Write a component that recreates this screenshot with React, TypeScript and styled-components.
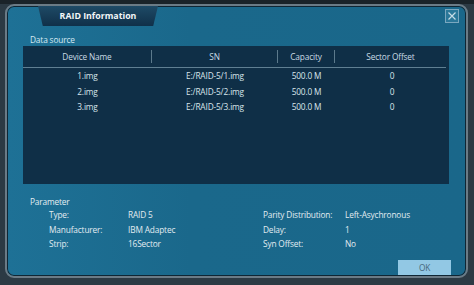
import styled, { createGlobalStyle } from "styled-components";

const GlobalStyle = createGlobalStyle`
  html, body {
    margin: 0;
    padding: 0;
    background: #27333c;
    font-family: "Open Sans", "Lato", sans-serif;
  }
`;

interface Row {
  name: string;
  sn: string;
  capacity: string;
  offset: string;
}

const rows: Row[] = [
  { name: "1.img", sn: "E:/RAID-5/1.img", capacity: "500.0 M", offset: "0" },
  { name: "2.img", sn: "E:/RAID-5/2.img", capacity: "500.0 M", offset: "0" },
  { name: "3.img", sn: "E:/RAID-5/3.img", capacity: "500.0 M", offset: "0" },
];

const params: [string, string, string, string][] = [
  ["Type:", "RAID 5", "Parity Distribution:", "Left-Asychronous"],
  ["Manufacturer:", "IBM Adaptec", "Delay:", "1"],
  ["Strip:", "16Sector", "Syn Offset:", "No"],
];

const columns = ["Device Name", "SN", "Capacity", "Sector Offset"];

export default function App() {
  return (
    <>
      <GlobalStyle />
      <Page>
        <Dialog>
          <TitleBar>
            <TitleTab>RAID Information</TitleTab>
            <CloseButton aria-label="Close">
              <svg width="10" height="10" viewBox="0 0 10 10">
                <path d="M1.5 1.5 L8.5 8.5 M8.5 1.5 L1.5 8.5" stroke="#c6dbe6" strokeWidth="1.2" />
              </svg>
            </CloseButton>
          </TitleBar>
          <Content>
            <SectionLabel>Data source</SectionLabel>
            <Table>
              <HeaderRow>
                {columns.map((c, i) => (
                  <HeaderCell key={c} $divider={i < columns.length - 1}>
                    {c}
                  </HeaderCell>
                ))}
              </HeaderRow>
              {rows.map((r) => (
                <BodyRow key={r.name}>
                  <Cell>{r.name}</Cell>
                  <Cell>{r.sn}</Cell>
                  <Cell>{r.capacity}</Cell>
                  <Cell>{r.offset}</Cell>
                </BodyRow>
              ))}
            </Table>
            <ParamLabel>Parameter</ParamLabel>
            <ParamGrid>
              {params.map((p) => (
                <ParamRow key={p[0]}>
                  <span>{p[0]}</span>
                  <span>{p[1]}</span>
                  <span>{p[2]}</span>
                  <span>{p[3]}</span>
                </ParamRow>
              ))}
            </ParamGrid>
            <Footer>
              <OkButton>OK</OkButton>
            </Footer>
          </Content>
        </Dialog>
      </Page>
    </>
  );
}

const Page = styled.div`
  width: 474px;
  height: 285px;
  padding-top: 4px;
  box-sizing: border-box;
  background: linear-gradient(#1a2329 0, #1a2329 4px, #2c3a44 4px);
  overflow: hidden;
`;

const Dialog = styled.div`
  margin-left: 5px;
  width: 463px;
  height: 274px;
  box-sizing: border-box;
  border: 2px solid #6b7b86;
  border-radius: 9px;
  box-shadow: inset 0 0 0 1px #0f2634;
  background: linear-gradient(90deg, #1e7196 0%, #1a688b 40%, #1a678a 100%);
  display: flex;
  flex-direction: column;
  overflow: hidden;
`;

const TitleBar = styled.div`
  height: 20px;
  display: flex;
  align-items: flex-start;
  justify-content: space-between;
  padding: 0 7px 0 31px;
`;

const TitleTab = styled.div`
  width: 120px;
  height: 20px;
  background: linear-gradient(#1e4a66, #103049);
  clip-path: polygon(0 0, 100% 0, 96% 100%, 4% 100%);
  color: #f2f6f8;
  font-size: 8.8px;
  font-weight: 700;
  display: flex;
  align-items: center;
  justify-content: center;
`;

const CloseButton = styled.div`
  margin-top: 3px;
  width: 14px;
  height: 14px;
  box-sizing: border-box;
  border: 1px solid #7aa7bf;
  background: #2a7799;
  display: grid;
  place-items: center;
`;

const Content = styled.div`
  flex: 1;
  display: flex;
  flex-direction: column;
  padding: 0 17px 0 16px;
  font-size: 8.3px;
  letter-spacing: -0.15px;
  color: #dbe8ee;
`;

const SectionLabel = styled.div`
  margin-top: 8px;
  padding-left: 7px;
  height: 12px;
  line-height: 12px;
  color: #d6e9f2;
`;

const Table = styled.div`
  height: 138px;
  background: #0f2f47;
  display: flex;
  flex-direction: column;
`;

const HeaderRow = styled.div`
  display: grid;
  grid-template-columns: 129px 126px 57px 1fr;
  height: 21px;
  align-items: center;
  border-bottom: 1px solid #5f7f92;
  margin-right: 3px;
`;

const HeaderCell = styled.div<{ $divider: boolean }>`
  text-align: center;
  color: #c9dbe4;
  height: 13px;
  line-height: 13px;
  border-right: ${(p) => (p.$divider ? "1px solid #5c7a8c" : "none")};
`;

const BodyRow = styled.div`
  display: grid;
  grid-template-columns: 129px 126px 57px 1fr;
  height: 15.5px;
  align-items: center;
  &:first-of-type {
    margin-top: 1px;
  }
`;

const Cell = styled.div`
  text-align: center;
  color: #d9e5eb;
`;

const ParamLabel = styled.div`
  margin-top: 12px;
  padding-left: 7px;
  height: 12px;
  line-height: 12px;
  color: #e4eef2;
`;

const ParamGrid = styled.div`
  display: flex;
  flex-direction: column;
  padding-left: 26px;
`;

const ParamRow = styled.div`
  display: grid;
  grid-template-columns: 79px 135px 82px 1fr;
  height: 14.5px;
  line-height: 14.5px;
  color: #e2ecf1;
`;

const Footer = styled.div`
  display: flex;
  justify-content: flex-end;
  margin-top: 8px;
  margin-right: -2px;
`;

const OkButton = styled.div`
  width: 53px;
  height: 15px;
  background: #92c8e4;
  color: #45657a;
  font-size: 8.3px;
  display: flex;
  align-items: center;
  justify-content: center;
`;
